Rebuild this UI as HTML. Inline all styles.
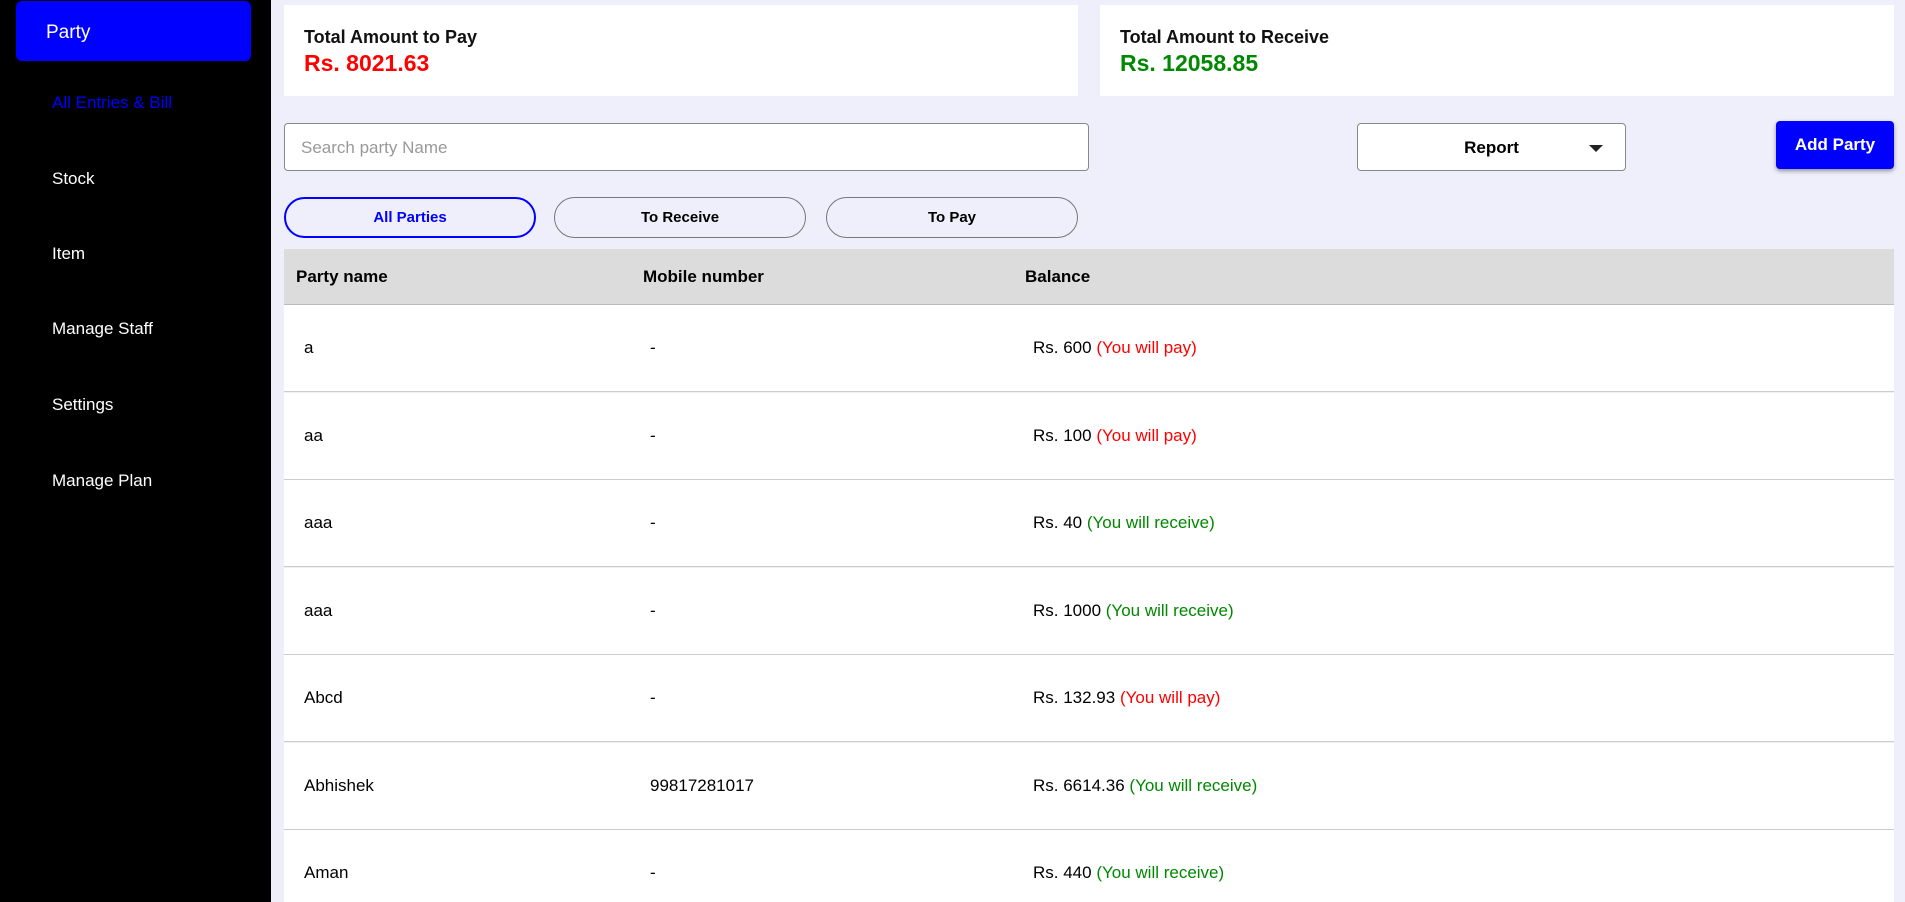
<!DOCTYPE html>
<html><head><style>
*{box-sizing:border-box;margin:0;padding:0}
html,body{width:1905px;height:902px;overflow:hidden}
body{background:#efeffb;font-family:"Liberation Sans",sans-serif;position:relative}
.sb{position:absolute;left:0;top:0;width:271px;height:902px;background:#000}
.pb{position:absolute;left:16px;top:1px;width:235px;height:60px;background:#0000ff;border-radius:6px;color:#fff;font-size:19px;padding:21px 0 0 30px}
.si{position:absolute;left:52px;color:#fff;font-size:17px}
.card{position:absolute;top:5px;height:91px;background:#fff;padding:22px 0 0 20px}
.card h3{font-size:18px;font-weight:bold;color:#111}
.card div{font-size:23px;font-weight:bold;margin-top:2px}
.search{position:absolute;left:284px;top:123px;width:805px;height:48px;background:#fff;border:1px solid #888;border-radius:4px;color:#999;font-size:17px;padding:14px 16px}
.report{position:absolute;left:1357px;top:123px;width:269px;height:48px;background:#fff;border:1px solid #888;border-radius:4px;font-size:17px;font-weight:bold;text-align:center;padding-top:14px}
.report:after{content:"";position:absolute;right:22px;top:21px;border-left:7px solid transparent;border-right:7px solid transparent;border-top:7px solid #222}
.add{position:absolute;left:1776px;top:121px;width:118px;height:48px;background:#0000ff;border-radius:4px;color:#fff;font-size:17px;font-weight:bold;text-align:center;padding-top:14px;box-shadow:0 2px 4px rgba(0,0,0,.4)}
.pill{position:absolute;top:197px;width:252px;height:41px;border:1px solid #777;border-radius:21px;font-size:15px;font-weight:bold;text-align:center;padding-top:11px}
.th{position:absolute;left:284px;top:249px;width:1610px;height:56px;background:#dcdcdc;border-bottom:1px solid #bbb;font-size:17px;font-weight:bold}
.th span,.row span{position:absolute}
.row{position:absolute;left:284px;width:1610px;height:87px;background:#fff;border-bottom:1px solid #ccc;font-size:17px}
.r{color:#f00;font-weight:normal}.g{color:#080;font-weight:normal}
</style></head><body>
<div class="sb">
<div class="pb">Party</div>
<div class="si" style="top:93px;color:#0000ff">All Entries &amp; Bill</div>
<div class="si" style="top:169px">Stock</div>
<div class="si" style="top:244px">Item</div>
<div class="si" style="top:319px">Manage Staff</div>
<div class="si" style="top:395px">Settings</div>
<div class="si" style="top:471px">Manage Plan</div>
</div>
<div class="card" style="left:284px;width:794px"><h3>Total Amount to Pay</h3><div class="r" style="font-weight:bold">Rs. 8021.63</div></div>
<div class="card" style="left:1100px;width:794px"><h3>Total Amount to Receive</h3><div class="g" style="font-weight:bold">Rs. 12058.85</div></div>
<div class="search">Search party Name</div>
<div class="report">Report</div>
<div class="add">Add Party</div>
<div class="pill" style="left:284px;border:2px solid #0000ff;color:#0000ff;padding-top:10px">All Parties</div>
<div class="pill" style="left:554px">To Receive</div>
<div class="pill" style="left:826px">To Pay</div>
<div class="th"><span style="left:12px;top:18px">Party name</span><span style="left:359px;top:18px">Mobile number</span><span style="left:741px;top:18px">Balance</span></div>
<div class="row" style="top:305px"><span style="left:20px;top:33px">a</span><span style="left:366px;top:33px">-</span><span style="left:749px;top:33px">Rs. 600 <b class="r">(You will pay)</b></span></div>
<div class="row" style="top:393px"><span style="left:20px;top:33px">aa</span><span style="left:366px;top:33px">-</span><span style="left:749px;top:33px">Rs. 100 <b class="r">(You will pay)</b></span></div>
<div class="row" style="top:480px"><span style="left:20px;top:33px">aaa</span><span style="left:366px;top:33px">-</span><span style="left:749px;top:33px">Rs. 40 <b class="g">(You will receive)</b></span></div>
<div class="row" style="top:568px"><span style="left:20px;top:33px">aaa</span><span style="left:366px;top:33px">-</span><span style="left:749px;top:33px">Rs. 1000 <b class="g">(You will receive)</b></span></div>
<div class="row" style="top:655px"><span style="left:20px;top:33px">Abcd</span><span style="left:366px;top:33px">-</span><span style="left:749px;top:33px">Rs. 132.93 <b class="r">(You will pay)</b></span></div>
<div class="row" style="top:743px"><span style="left:20px;top:33px">Abhishek</span><span style="left:366px;top:33px">99817281017</span><span style="left:749px;top:33px">Rs. 6614.36 <b class="g">(You will receive)</b></span></div>
<div class="row" style="top:830px"><span style="left:20px;top:33px">Aman</span><span style="left:366px;top:33px">-</span><span style="left:749px;top:33px">Rs. 440 <b class="g">(You will receive)</b></span></div>
</body></html>
